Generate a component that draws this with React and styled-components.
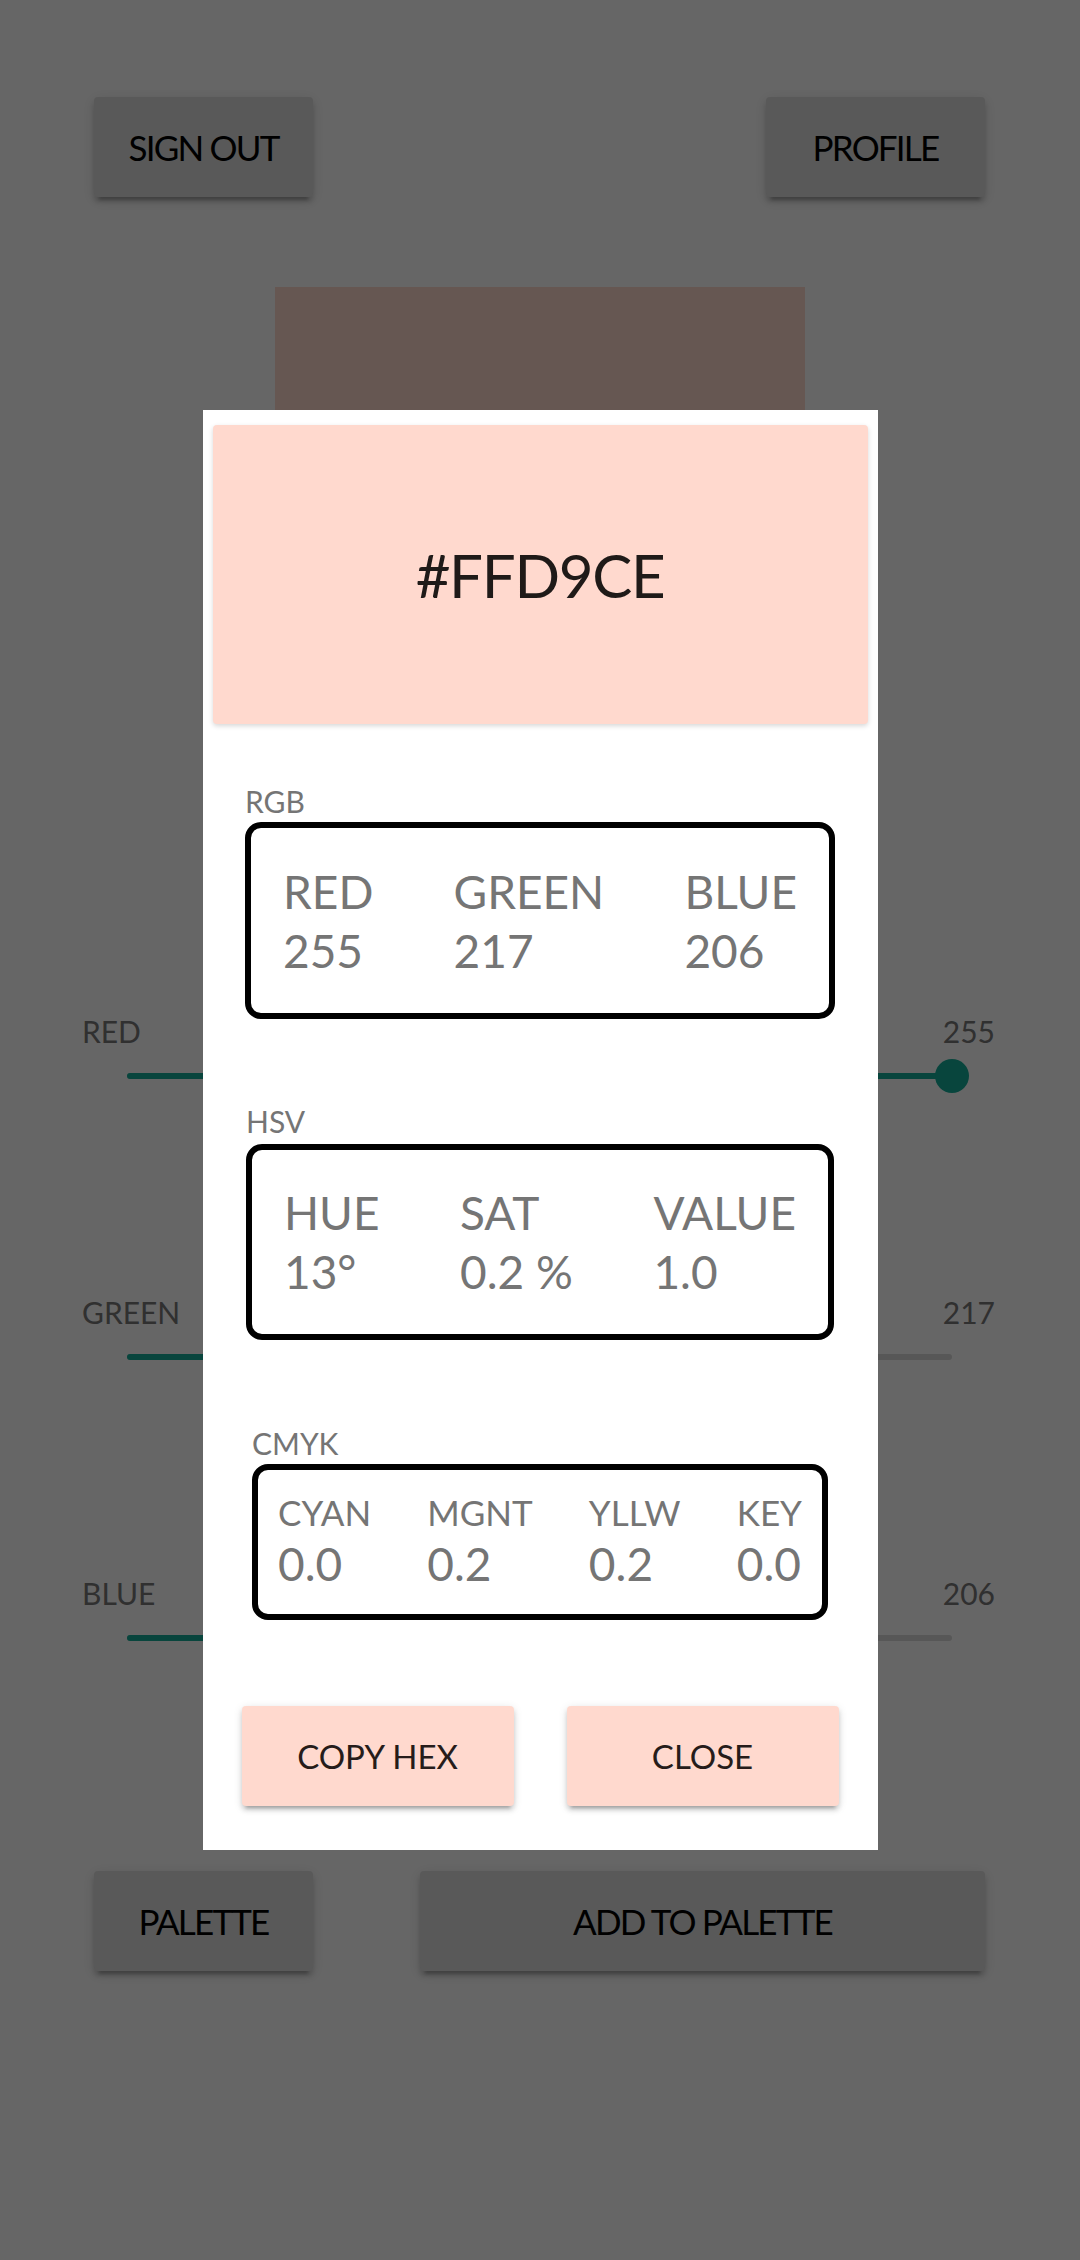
import React from 'react';
import styled, {createGlobalStyle} from 'styled-components';

const FONT = 'Lato, "Noto Sans", "Liberation Sans", sans-serif';

const color = {hex: '#FFD9CE', r: 255, g: 217, b: 206};

const sliders = [
    {name: 'RED', value: color.r},
    {name: 'GREEN', value: color.g},
    {name: 'BLUE', value: color.b},
];

const groups = [
    {
        title: 'RGB', width: 590, top: 59, gap: 3, height: 197, pad: 32, small: false,
        items: [['RED', '255'], ['GREEN', '217'], ['BLUE', '206']],
    },
    {
        title: 'HSV', width: 588, top: 84, gap: 5, height: 196, pad: 32, small: false,
        items: [['HUE', '13°'], ['SAT', '0.2 %'], ['VALUE', '1.0']],
    },
    {
        title: 'CMYK', width: 576, top: 85, gap: 3, height: 156, pad: 20, small: true,
        items: [['CYAN', '0.0'], ['MGNT', '0.2'], ['YLLW', '0.2'], ['KEY', '0.0']],
    },
];

const App = () => {
    return (
        <>
            <GlobalStyle />
            <Page>
                <TopBar>
                    <PageButton $width={219}>Sign out</PageButton>
                    <PageButton $width={219}>Profile</PageButton>
                </TopBar>

                <Preview />

                <SliderList>
                    {sliders.map(item => (
                        <SliderBlock key={item.name}>
                            <SliderHead>
                                <span>{item.name}</span>
                                <span>{item.value}</span>
                            </SliderHead>
                            <Track>
                                <Rail>
                                    <Fill style={{width: `${(item.value / 255) * 100}%`}} />
                                    <Thumb style={{left: `${(item.value / 255) * 100}%`}} />
                                </Rail>
                            </Track>
                        </SliderBlock>
                    ))}
                </SliderList>

                <BottomBar>
                    <PageButton $width={219}>Palette</PageButton>
                    <PageButton $width={565}>Add to palette</PageButton>
                </BottomBar>
            </Page>

            <Backdrop>
                <Dialog>
                    <Swatch>{color.hex}</Swatch>

                    {groups.map(group => (
                        <Section key={group.title} $width={group.width} $top={group.top}>
                            <SectionTitle $gap={group.gap}>{group.title}</SectionTitle>
                            <ValueBox $height={group.height} $pad={group.pad}>
                                {group.items.map(([label, value]) => (
                                    <Column key={label}>
                                        <ColumnLabel $small={group.small}>{label}</ColumnLabel>
                                        <ColumnValue $small={group.small}>{value}</ColumnValue>
                                    </Column>
                                ))}
                            </ValueBox>
                        </Section>
                    ))}

                    <Actions>
                        <ActionButton>Copy hex</ActionButton>
                        <ActionButton>Close</ActionButton>
                    </Actions>
                </Dialog>
            </Backdrop>
        </>
    );
};

const GlobalStyle = createGlobalStyle`
    html, body {
        margin: 0;
        padding: 0;
    }
    body {
        background: #fff;
        font-family: ${FONT};
    }
`;

const Page = styled.div`
    width: 1080px;
    height: 2260px;
    overflow: hidden;
    display: flex;
    flex-direction: column;
`;
const TopBar = styled.div`
    display: flex;
    justify-content: space-between;
    padding: 97px 95px 0 94px;
`;
const PageButton = styled.button`
    width: ${p => p.$width}px;
    height: 100px;
    padding: 0;
    border: none;
    border-radius: 4px;
    background: #dedede;
    box-shadow: 0 8px 3px -5px rgba(0, 0, 0, 0.2), 0 5px 5px 0 rgba(0, 0, 0, 0.14), 0 3px 14px 0 rgba(0, 0, 0, 0.12);
    font-family: ${FONT};
    font-size: 35px;
    letter-spacing: -1.8px;
    color: #000;
    text-transform: uppercase;
`;
const Preview = styled.div`
    width: 530px;
    height: 560px;
    margin: 90px auto 0;
    background: ${color.hex};
`;
const SliderList = styled.div`
    display: flex;
    flex-direction: column;
    gap: 191px;
    margin-top: 166px;
`;
const SliderBlock = styled.div`
    display: flex;
    flex-direction: column;
`;
const SliderHead = styled.div`
    display: flex;
    justify-content: space-between;
    padding: 0 85px 0 82px;
    font-size: 30px;
    line-height: 36px;
    color: #787878;
`;
const Track = styled.div`
    height: 54px;
    margin: 0 128px 0 127px;
    display: flex;
    align-items: center;
`;
const Rail = styled.div`
    position: relative;
    flex: 1;
    height: 6px;
    border-radius: 3px;
    background: #d9d9d9;
`;
const Fill = styled.div`
    height: 100%;
    border-radius: 3px;
    background: #14ad98;
`;
const Thumb = styled.div`
    position: absolute;
    top: 50%;
    width: 34px;
    height: 34px;
    border-radius: 50%;
    background: #14ad98;
    transform: translate(-50%, -50%);
`;
const BottomBar = styled.div`
    display: flex;
    justify-content: space-between;
    padding: 206px 95px 0 94px;
`;

const Backdrop = styled.div`
    position: fixed;
    inset: 0;
    background: rgba(0, 0, 0, 0.6);
    display: flex;
    align-items: center;
    justify-content: center;
`;
const Dialog = styled.div`
    width: 675px;
    box-sizing: border-box;
    padding: 15px 10px 44px;
    background: #fff;
    display: flex;
    flex-direction: column;
`;
const Swatch = styled.div`
    height: 299px;
    border-radius: 4px;
    background: ${color.hex};
    box-shadow: 0 2px 5px rgba(0, 0, 0, 0.16);
    display: flex;
    align-items: center;
    justify-content: center;
    font-size: 60px;
    letter-spacing: -1.3px;
    color: #1f1a18;
`;
const Section = styled.section`
    width: ${p => p.$width}px;
    margin: ${p => p.$top}px auto 0;
`;
const SectionTitle = styled.div`
    margin-bottom: ${p => p.$gap}px;
    font-size: 30px;
    line-height: 36px;
    color: #757575;
`;
const ValueBox = styled.div`
    height: ${p => p.$height}px;
    box-sizing: border-box;
    padding: 0 ${p => p.$pad}px;
    border: 6px solid #000;
    border-radius: 16px;
    display: flex;
    justify-content: space-between;
    align-items: center;
`;
const Column = styled.div`
    display: flex;
    flex-direction: column;
    color: #757575;
`;
const ColumnLabel = styled.span`
    font-size: ${p => (p.$small ? 35 : 46)}px;
    line-height: ${p => (p.$small ? 42 : 59)}px;
`;
const ColumnValue = styled.span`
    font-size: 46px;
    line-height: ${p => (p.$small ? 61 : 59)}px;
`;
const Actions = styled.div`
    display: flex;
    justify-content: center;
    gap: 53px;
    margin-top: 86px;
`;
const ActionButton = styled.button`
    width: 272px;
    height: 100px;
    padding: 0;
    border: none;
    border-radius: 4px;
    background: ${color.hex};
    box-shadow: 0 6px 3px -4px rgba(0, 0, 0, 0.2), 0 4px 5px 0 rgba(0, 0, 0, 0.14), 0 2px 10px 0 rgba(0, 0, 0, 0.12);
    font-family: ${FONT};
    font-size: 33px;
    color: #261c1a;
    text-transform: uppercase;
`;

export default App;
